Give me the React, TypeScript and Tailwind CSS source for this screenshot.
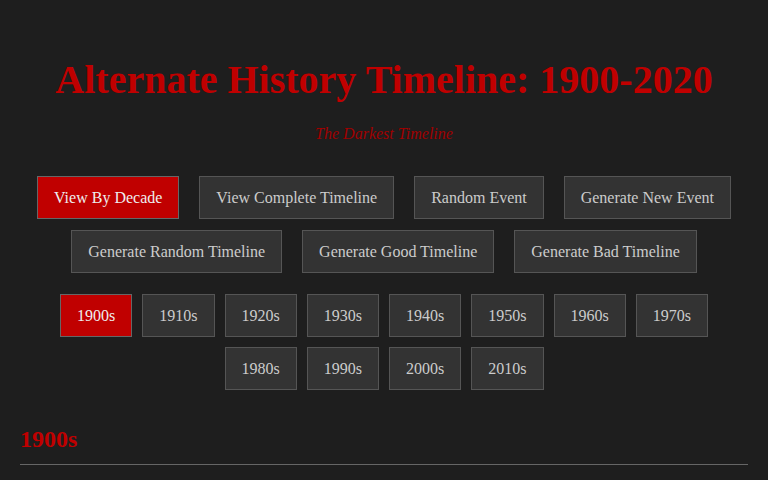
import { useState } from "react";

const actions = [
  "View By Decade",
  "View Complete Timeline",
  "Random Event",
  "Generate New Event",
  "Generate Random Timeline",
  "Generate Good Timeline",
  "Generate Bad Timeline",
];

const decades = [
  "1900s",
  "1910s",
  "1920s",
  "1930s",
  "1940s",
  "1950s",
  "1960s",
  "1970s",
  "1980s",
  "1990s",
  "2000s",
  "2010s",
];

export default function App() {
  const [mode, setMode] = useState("View By Decade");
  const [decade, setDecade] = useState("1900s");

  return (
    <div className="min-h-[480px] bg-[#1e1e1e] px-5 pt-[57px] font-['Liberation_Serif',serif] text-[#dddddd]">
      <h1 className="text-center text-[40px] leading-[46px] font-bold text-[#c00000]">
        Alternate History Timeline: 1900-2020
      </h1>
      <p className="mt-[22px] text-center text-base leading-[18px] italic text-[#a00000]">
        The Darkest Timeline
      </p>

      <div className="mx-auto mt-[33px] flex max-w-[700px] flex-wrap justify-center gap-x-5 gap-y-[11px]">
        {actions.map((name) => (
          <button
            key={name}
            onClick={() => setMode(name)}
            className={
              mode === name
                ? "h-[43px] border border-[#666666] bg-[#c00000] px-4 text-base text-[#eeeeee]"
                : "h-[43px] border border-[#555555] bg-[#333333] px-4 text-base text-[#cccccc]"
            }
          >
            {name}
          </button>
        ))}
      </div>

      <div className="mx-auto mt-[21px] flex max-w-[660px] flex-wrap justify-center gap-2.5">
        {decades.map((d) => (
          <button
            key={d}
            onClick={() => setDecade(d)}
            className={
              d === decade
                ? "h-[43px] w-[72.25px] border border-[#666666] bg-[#c00000] text-base text-[#eeeeee]"
                : "h-[43px] w-[72.25px] border border-[#555555] bg-[#333333] text-base text-[#cccccc]"
            }
          >
            {d}
          </button>
        ))}
      </div>

      <h2 className="mt-[35px] text-2xl leading-[28px] font-bold text-[#c00000]">{decade}</h2>
      <div className="mt-[11px] h-px bg-[#666666]" />
    </div>
  );
}
